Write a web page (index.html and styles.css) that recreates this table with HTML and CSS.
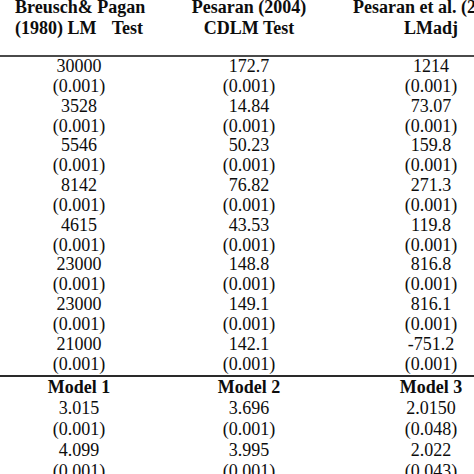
FILE: index.html
```html
<!DOCTYPE html>
<html lang="en">
<head>
  <meta charset="UTF-8">
  <meta name="viewport" content="width=device-width, initial-scale=1">
  <title>Cross-section dependence tests</title>
  <link rel="stylesheet" href="styles.css">
</head>
<body>
  <table class="tabla">
    <colgroup>
      <col class="col-1">
      <col class="col-2">
      <col class="col-3">
    </colgroup>
    <thead>
      <tr class="cabecera">
        <th>
          <div class="titulo-bp">
            <span>Breusch&amp; Pagan</span>
            <span class="linea"><span>(1980) LM</span><span>Test</span></span>
          </div>
        </th>
        <th>Pesaran (2004)<br>CDLM Test</th>
        <th>Pesaran et al. (2015)<br>LMadj</th>
      </tr>
    </thead>
    <tbody class="pruebas">
      <tr><td>30000</td><td>172.7</td><td>1214</td></tr>
      <tr><td>(0.001)</td><td>(0.001)</td><td>(0.001)</td></tr>
      <tr><td>3528</td><td>14.84</td><td>73.07</td></tr>
      <tr><td>(0.001)</td><td>(0.001)</td><td>(0.001)</td></tr>
      <tr><td>5546</td><td>50.23</td><td>159.8</td></tr>
      <tr><td>(0.001)</td><td>(0.001)</td><td>(0.001)</td></tr>
      <tr><td>8142</td><td>76.82</td><td>271.3</td></tr>
      <tr><td>(0.001)</td><td>(0.001)</td><td>(0.001)</td></tr>
      <tr><td>4615</td><td>43.53</td><td>119.8</td></tr>
      <tr><td>(0.001)</td><td>(0.001)</td><td>(0.001)</td></tr>
      <tr><td>23000</td><td>148.8</td><td>816.8</td></tr>
      <tr><td>(0.001)</td><td>(0.001)</td><td>(0.001)</td></tr>
      <tr><td>23000</td><td>149.1</td><td>816.1</td></tr>
      <tr><td>(0.001)</td><td>(0.001)</td><td>(0.001)</td></tr>
      <tr><td>21000</td><td>142.1</td><td>-751.2</td></tr>
      <tr><td>(0.001)</td><td>(0.001)</td><td>(0.001)</td></tr>
    </tbody>
    <tbody class="modelos">
      <tr class="titulo-modelo"><th>Model 1</th><th>Model 2</th><th>Model 3</th></tr>
      <tr><td>3.015</td><td>3.696</td><td>2.0150</td></tr>
      <tr><td>(0.001)</td><td>(0.001)</td><td>(0.048)</td></tr>
      <tr><td>4.099</td><td>3.995</td><td>2.022</td></tr>
      <tr><td>(0.001)</td><td>(0.001)</td><td>(0.043)</td></tr>
    </tbody>
  </table>
</body>
</html>
```

FILE: styles.css
```css
html, body {
  overflow: hidden;
}

body {
  margin: 0;
  background: #fff;
  color: #0d0d0d;
  font-family: "Liberation Serif", "Times New Roman", serif;
  font-size: 18px;
}

.tabla {
  width: 522px;
  margin-top: -3px;
  border-collapse: collapse;
  table-layout: fixed;
}

.col-1 { width: 158px; }
.col-2 { width: 182px; }
.col-3 { width: 182px; }

th, td {
  padding: 0;
  text-align: center;
  white-space: nowrap;
}

.cabecera th {
  line-height: 21px;
  padding-bottom: 16px;
  border-bottom: 2px solid #4a4a4a;
  vertical-align: top;
}

.titulo-bp {
  display: flex;
  flex-direction: column;
  width: 128px;
  margin: 0 auto;
}

.linea {
  display: flex;
  justify-content: space-between;
}

.pruebas td {
  line-height: 19.85px;
}

.modelos th,
.modelos td {
  line-height: 21px;
}

.titulo-modelo th {
  border-top: 2px solid #2a2a2a;
}
```
